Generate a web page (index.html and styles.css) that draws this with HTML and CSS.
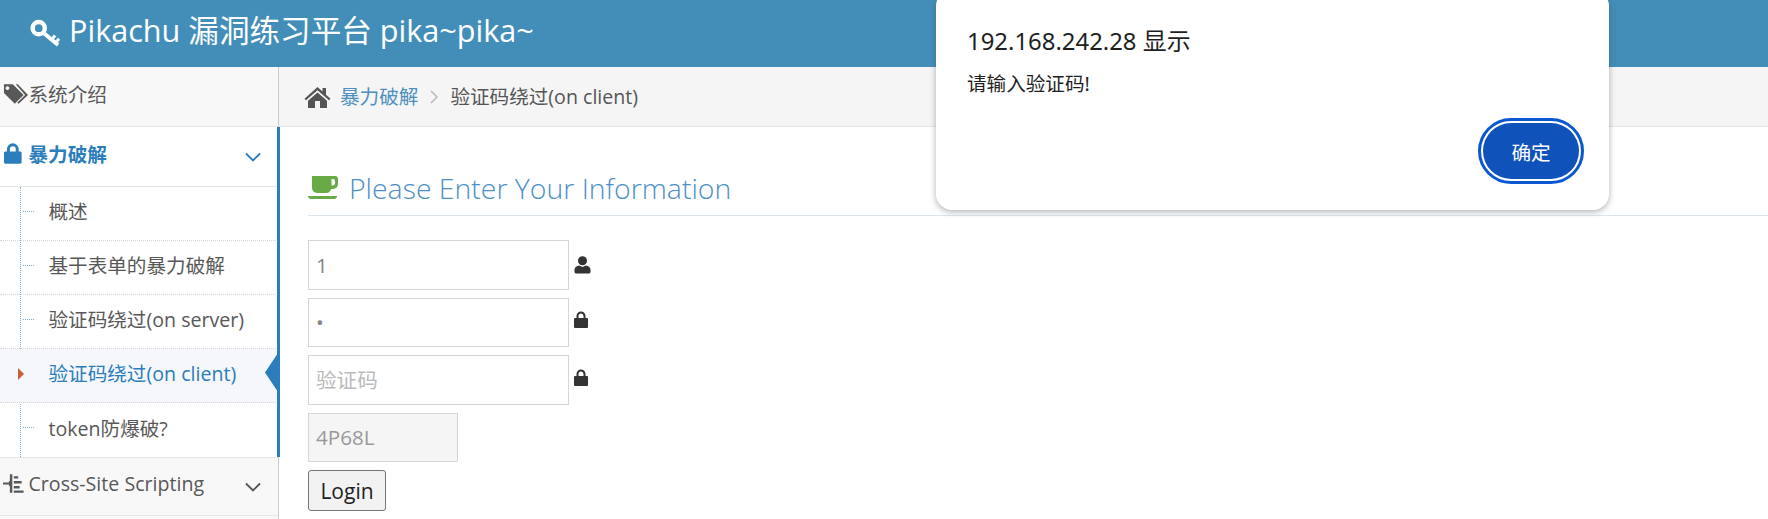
FILE: index.html
```html
<!DOCTYPE html>
<html lang="zh-CN">
<head>
    <meta charset="UTF-8">
    <meta name="viewport" content="width=device-width, initial-scale=1.0">
    <title>Pikachu</title>
    <link rel="stylesheet" href="styles.css">
</head>
<body>
    <header class="navbar">
        <svg class="brand-icon" viewBox="0 0 32 30"><circle cx="9" cy="9.500" r="6.300" fill="none" stroke="#fff" stroke-width="4.600"/><path d="M13.500 14 L29 27" fill="none" stroke="#fff" stroke-width="4"/><path d="M22.500 21 L26 17 M26.500 24.500 L30 20.500" fill="none" stroke="#fff" stroke-width="3.200"/></svg>
        <span class="brand">Pikachu 漏洞练习平台 pika~pika~</span>
    </header>

    <div class="layout">
        <nav class="sidebar">
            <div class="menu-item">
                <svg class="menu-icon" viewBox="0 0 26 22"><path d="M1 1 H10 L21 12 L12 21 L1 10 Z M4.500 3 a2 2 0 1 0 .01 0 Z" fill="#585858" fill-rule="evenodd"/><path d="M13 1 H15 L25.500 12 L16 21 L14.500 20 L22.500 12 Z" fill="#585858"/></svg>
                <span class="menu-text">系统介绍</span>
            </div>

            <div class="menu-open">
                <div class="menu-item open">
                    <svg class="menu-icon" viewBox="0 0 26 22"><path d="M4 9 V6 a6 6 0 0 1 12 0 V9 H13 V6 a3 3 0 0 0 -6 0 V9 Z M2.500 8.500 H17.500 a1.500 1.500 0 0 1 1.500 1.500 V19.500 a1.500 1.500 0 0 1 -1.500 1.500 H2.500 A1.500 1.500 0 0 1 1 19.500 V10 A1.500 1.500 0 0 1 2.500 8.500 Z" fill="#2b7dbc"/></svg>
                    <span class="menu-text">暴力破解</span>
                    <svg class="chevron" viewBox="0 0 16 10"><path d="M1 1.500 L8 8.500 L15 1.500" fill="none" stroke="#2b7dbc" stroke-width="1.800"/></svg>
                </div>
                <ul class="submenu">
                    <li><span>概述</span></li>
                    <li><span>基于表单的暴力破解</span></li>
                    <li><span>验证码绕过(on server)</span></li>
                    <li class="active"><span>验证码绕过(on client)</span></li>
                    <li class="last"><span>token防爆破?</span></li>
                </ul>
            </div>

            <div class="menu-item next">
                <svg class="menu-icon" viewBox="0 0 26 22"><path d="M0 9.500 H6 V7.500 L8.500 10.500 L6 13.500 V11.500 H0 Z M7 1 H9.500 V20 H7 Z M11 3 H15.500 V5.500 H11 Z M11 8 H19 V10.500 H11 Z M11 13 H17 V15.500 H11 Z M11 17.500 H21 V20 H11 Z" fill="#585858"/></svg>
                <span class="menu-text">Cross-Site Scripting</span>
                <svg class="chevron" viewBox="0 0 16 10"><path d="M1 1.500 L8 8.500 L15 1.500" fill="none" stroke="#555" stroke-width="1.800"/></svg>
            </div>
        </nav>

        <main class="main">
            <div class="breadcrumbs">
                <svg class="home-icon" viewBox="0 0 27 22"><path d="M13.500 1 L18.500 5.500 V2 H22 V8.700 L26.500 12.700 L25 14.300 L13.500 4.200 L2 14.300 L.5 12.700 Z M13.500 6.500 L23 14.800 V22 H16 V15 H11 V22 H4 V14.800 Z" fill="#555"/></svg>
                <span class="crumb-link">暴力破解</span>
                <svg class="crumb-sep" viewBox="0 0 8 14"><path d="M1 1 L7 7 L1 13" fill="none" stroke="#b5b9bd" stroke-width="1.500"/></svg>
                <span class="crumb-current">验证码绕过(on client)</span>
            </div>

            <div class="content">
                <h2 class="title">
                    <svg class="coffee-icon" viewBox="0 0 30 24"><path d="M4 0 H28 a3 3 0 0 1 2 3 V8 a5 5 0 0 1 -5 5 H23 a5 5 0 0 1 -5 4 H9 a5 5 0 0 1 -5 -5 Z M23.500 3 V9.500 H25 a2.200 2.200 0 0 0 2 -2 V5 a2 2 0 0 0 -2 -2 Z" fill="#69aa46" fill-rule="evenodd"/><path d="M0 20 H29 V21 L27 23 H2 L0 21 Z" fill="#69aa46"/></svg>
                    <span>Please Enter Your Information</span>
                </h2>

                <form class="login-form">
                    <div class="field">
                        <input class="text-input" type="text" value="1">
                        <svg class="user-icon" viewBox="0 0 17 19"><circle cx="8.500" cy="5" r="4.800" fill="#333"/><path d="M2 18.500 a2 2 0 0 1 -2 -2 V15 C0 12 2 10.500 5 10 L8.500 11.500 L12 10 C15 10.500 17 12 17 15 V16.500 a2 2 0 0 1 -2 2 Z" fill="#333"/></svg>
                    </div>
                    <div class="field">
                        <input class="text-input" type="password" value="1">
                        <svg class="lock-icon" viewBox="0 0 14 17"><path d="M2.500 7 V5 a4.500 4.500 0 0 1 9 0 V7 H9.500 V5 a2.500 2.500 0 0 0 -5 0 V7 Z M1 7 H13 a1 1 0 0 1 1 1 V16 a1 1 0 0 1 -1 1 H1 A1 1 0 0 1 0 16 V8 A1 1 0 0 1 1 7 Z" fill="#333"/></svg>
                    </div>
                    <div class="field">
                        <input class="text-input" type="text" placeholder="验证码">
                        <svg class="lock-icon" viewBox="0 0 14 17"><path d="M2.500 7 V5 a4.500 4.500 0 0 1 9 0 V7 H9.500 V5 a2.500 2.500 0 0 0 -5 0 V7 Z M1 7 H13 a1 1 0 0 1 1 1 V16 a1 1 0 0 1 -1 1 H1 A1 1 0 0 1 0 16 V8 A1 1 0 0 1 1 7 Z" fill="#333"/></svg>
                    </div>
                    <input class="code-input" type="text" value="4P68L" disabled>
                    <button class="login-btn" type="button">Login</button>
                </form>
            </div>
        </main>
    </div>

    <div class="dialog">
        <div class="dialog-title">192.168.242.28 显示</div>
        <div class="dialog-msg">请输入验证码!</div>
        <div class="dialog-actions">
            <button class="dialog-btn" type="button">确定</button>
        </div>
    </div>
</body>
</html>
```

FILE: styles.css
```css
* {
    box-sizing: border-box;
}

html,
body {
    height: 519px;
    overflow: hidden;
}

body {
    margin: 0;
    font-family: "Open Sans", "Noto Sans CJK SC", sans-serif;
    font-size: 19.6px;
    color: #585858;
    background-color: #fff;
}

.navbar {
    display: flex;
    align-items: center;
    height: 67px;
    padding-left: 30px;
    background-color: #438eb9;
}

.brand-icon {
    width: 31px;
    height: 29px;
    margin-right: 8px;
}

.brand {
    padding-bottom: 9px;
    font-size: 30.6px;
    color: #fff;
}

.layout {
    display: flex;
}

/* sidebar */
.sidebar {
    flex: none;
    width: 279px;
    height: 452px;
    background-color: #f8f8f8;
    border-right: 1px solid #ccc;
}

.menu-item {
    display: flex;
    align-items: center;
    height: 60px;
    padding-left: 3px;
    border-bottom: 1px solid #e5e5e5;
}

.menu-item.open {
    color: #2b7dbc;
    font-weight: 700;
    background-color: #fff;
}

.menu-item.next {
    height: 59px;
    border-top: 1px solid #e5e5e5;
}

.menu-icon {
    flex: none;
    width: 25.5px;
    height: 22px;
    margin-bottom: 5px;
}

.menu-text {
    padding-bottom: 6px;
}

.chevron {
    flex: none;
    width: 16px;
    height: 10px;
    margin-left: auto;
    margin-right: 17px;
}

.menu-open {
    position: relative;
}

.menu-open::after {
    content: "";
    position: absolute;
    top: 0;
    bottom: 0;
    right: -2px;
    width: 3px;
    background-color: #2b7dbc;
}

.submenu {
    position: relative;
    margin: 0;
    padding: 0;
    list-style: none;
    background-color: #fff;
}

.submenu::before {
    content: "";
    position: absolute;
    top: 0;
    bottom: 0;
    left: 20px;
    border-left: 1px dotted #7fb0d4;
}

.submenu li {
    position: relative;
    display: flex;
    align-items: center;
    height: 54px;
    padding-left: 48.5px;
    border-bottom: 1px dotted #d5d5d5;
}

.submenu li span {
    padding-bottom: 6px;
}

.submenu li.last {
    border-bottom: none;
}

.submenu li::before {
    content: "";
    position: absolute;
    top: 50%;
    left: 23px;
    width: 11px;
    margin-top: -3px;
    border-top: 1px dotted #7fb0d4;
}

.submenu li.active {
    color: #2b7dbc;
    background-color: #f5f7fb;
}

.submenu li.active::before {
    left: 18px;
    width: 0;
    margin-top: -8px;
    border-top: 6px solid transparent;
    border-bottom: 6px solid transparent;
    border-left: 6px solid #c86139;
}

.submenu li.active::after {
    content: "";
    position: absolute;
    top: 4px;
    bottom: 10px;
    right: 0;
    width: 13px;
    background-color: #2b7dbc;
    clip-path: polygon(100% 0, 0 50%, 100% 100%);
}

/* main */
.main {
    flex: 1;
    min-width: 0;
}

.breadcrumbs {
    display: flex;
    align-items: center;
    height: 60px;
    padding-left: 25px;
    font-size: 19.6px;
    background-color: #f5f5f5;
    border-bottom: 1px solid #e5e5e5;
}

.breadcrumbs span {
    padding-bottom: 3px;
}

.home-icon {
    width: 27px;
    height: 22px;
    margin-right: 9px;
}

.crumb-link {
    color: #4c8fbd;
}

.crumb-sep {
    width: 8px;
    height: 14px;
    margin: 0 12px;
}

.crumb-current {
    color: #555;
}

.content {
    padding: 26px 0 0 29px;
}

.title {
    display: flex;
    align-items: center;
    height: 63px;
    margin: 0;
    padding-top: 8px;
    font-size: 28.4px;
    font-weight: 300;
    color: #4c8fc9;
    border-bottom: 1px solid #dce5ec;
}

.coffee-icon {
    width: 30px;
    height: 24px;
    margin-right: 11px;
}

.login-form {
    display: flex;
    flex-direction: column;
    align-items: flex-start;
    padding-top: 24px;
}

.field {
    display: flex;
    align-items: center;
    margin-bottom: 8px;
}

.text-input,
.code-input {
    height: 49.5px;
    padding: 0 7px;
    font-family: inherit;
    font-size: 20.6px;
    color: #858585;
    background-color: #fff;
    border: 1px solid #d5d5d5;
    border-radius: 0;
}

.text-input {
    width: 261px;
}

.text-input::placeholder {
    color: #bbb;
}

.user-icon {
    width: 17px;
    height: 18px;
    margin-left: 5px;
}

.lock-icon {
    width: 14px;
    height: 17px;
    margin-left: 5px;
    margin-bottom: 5px;
}

.code-input {
    width: 150px;
    color: #999;
    background-color: #f5f5f5;
    margin-bottom: 8px;
}

.login-btn {
    width: 78px;
    height: 41px;
    padding: 0;
    font-family: inherit;
    font-size: 21px;
    color: #222;
    background-color: #f2f2f2;
    border: 1px solid #767676;
    border-radius: 3px;
}

/* alert dialog */
.dialog {
    position: absolute;
    top: -10px;
    left: 936px;
    width: 673px;
    height: 220px;
    padding: 35px 31px 0;
    font-family: "Noto Sans", "Noto Sans CJK SC", sans-serif;
    color: #1f1f1f;
    background-color: #fff;
    border-radius: 16px;
    box-shadow: 0 2px 6px rgba(60, 64, 67, 0.4);
}

.dialog-title {
    font-size: 23.9px;
    line-height: 32px;
}

.dialog-msg {
    margin-top: 14px;
    font-size: 19.6px;
    line-height: 26px;
}

.dialog-actions {
    display: flex;
    justify-content: flex-end;
    margin-top: 26px;
    margin-right: -1px;
}

.dialog-btn {
    width: 96px;
    height: 56px;
    padding: 0;
    font-family: inherit;
    font-size: 19.6px;
    color: #fff;
    background-color: #0f52ba;
    border: none;
    border-radius: 28px;
    outline: 3px solid #0b57d0;
    outline-offset: 2px;
}
```
